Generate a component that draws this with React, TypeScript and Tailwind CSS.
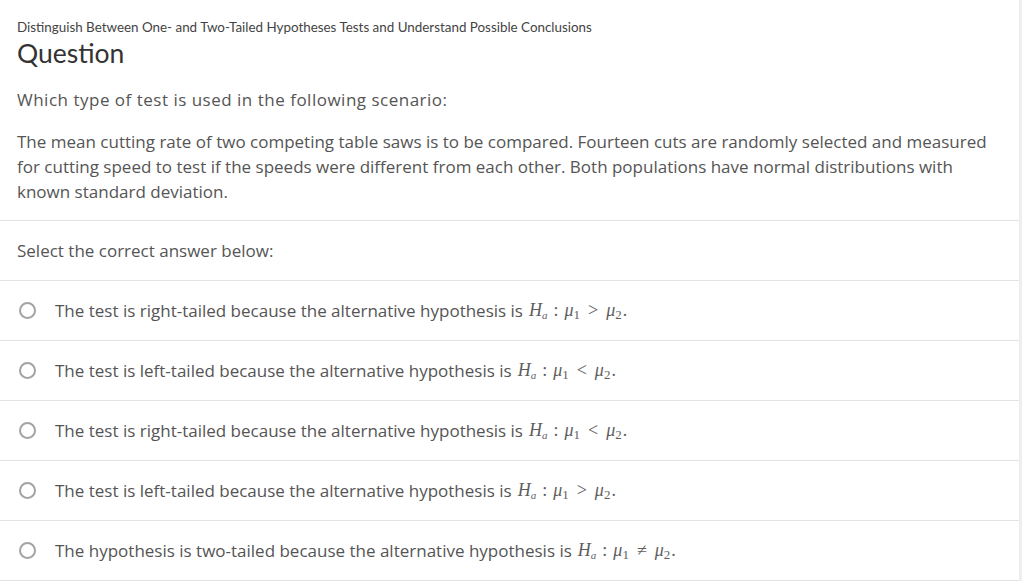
import type { ReactNode } from "react";

const options: { lead: string; op: ReactNode }[] = [
  { lead: "The test is right-tailed because the alternative hypothesis is", op: ">" },
  { lead: "The test is left-tailed because the alternative hypothesis is", op: "<" },
  { lead: "The test is right-tailed because the alternative hypothesis is", op: "<" },
  { lead: "The test is left-tailed because the alternative hypothesis is", op: ">" },
  { lead: "The hypothesis is two-tailed because the alternative hypothesis is", op: "≠" },
];

function Hyp({ op }: { op: ReactNode }) {
  return (
    <span className="ml-[6px] inline-flex items-baseline font-['Liberation_Serif',serif] text-[18px] text-[#5e5e5e]">
      <span className="italic">H</span>
      <span className="relative top-[3px] text-[11px] italic">a</span>
      <span className="mx-[6px]">:</span>
      <span className="italic">μ</span>
      <span className="relative top-[3px] text-[13px]">1</span>
      <span className="mx-[8px]">{op}</span>
      <span className="italic">μ</span>
      <span className="relative top-[3px] text-[13px]">2</span>
      <span className="ml-[1px]">.</span>
    </span>
  );
}

export default function App() {
  return (
    <main className="min-h-screen bg-white font-['Open_Sans','Noto_Sans',sans-serif]">
      <div className="w-[1022px] border-r-[3px] border-[#eeeeee]">
        <div className="border-b border-[#e3e3e3] pb-[16px] pl-[17px] pr-[30px] pt-[19px]">
          <p className="font-['Lato',sans-serif] text-[13.4px] leading-[16px] text-[#444]">
            Distinguish Between One- and Two-Tailed Hypotheses Tests and Understand Possible Conclusions
          </p>
          <h1 className="mt-[2px] font-['Lato',sans-serif] text-[26.5px] leading-[32px] text-[#333]">
            Question
          </h1>
          <p className="mt-[18px] text-[17px] leading-[25px] tracking-[0.5px] text-[#555]">
            Which type of test is used in the following scenario:
          </p>
          <p className="mt-[17px] text-[17px] leading-[25px] text-[#555]">
            The mean cutting rate of two competing table saws is to be compared. Fourteen cuts are randomly selected and measured
            for cutting speed to test if the speeds were different from each other. Both populations have normal distributions with
            known standard deviation.
          </p>
        </div>
        <div className="flex h-[60px] items-center border-b border-[#e3e3e3] pl-[17px] text-[17px] text-[#555]">
          Select the correct answer below:
        </div>
        {options.map((o, i) => (
          <div
            key={i}
            className="flex h-[60px] items-center border-b border-[#e3e3e3] pl-[19px] text-[17px] text-[#555]"
          >
            <span className="mr-[19px] h-[17px] w-[17px] rounded-full border-2 border-[#a3a3a3]" />
            <span>{o.lead}</span>
            <Hyp op={o.op} />
          </div>
        ))}
      </div>
    </main>
  );
}
